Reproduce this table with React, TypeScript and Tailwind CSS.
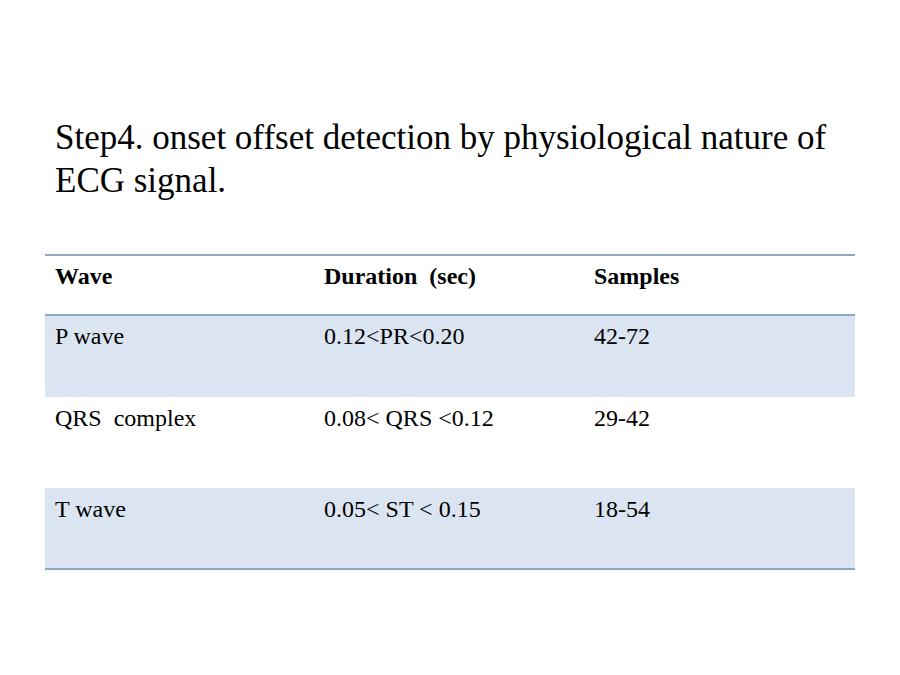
const rows = [
  { wave: "P wave", duration: "0.12<PR<0.20", samples: "42-72", fill: true, h: "h-[81px]", pt: "pt-2" },
  { wave: "QRS  complex", duration: "0.08< QRS <0.12", samples: "29-42", fill: false, h: "h-[91px]", pt: "pt-[9px]" },
  { wave: "T wave", duration: "0.05< ST < 0.15", samples: "18-54", fill: true, h: "h-[80px]", pt: "pt-[9px]" },
];

export default function App() {
  return (
    <div
      className="w-[900px] h-[675px] bg-white text-black overflow-hidden"
      style={{ fontFamily: '"Liberation Serif", "Times New Roman", serif' }}
    >
      <h1 className="pl-[55px] pr-10 pt-[116px] text-[35px] leading-[43px] font-normal whitespace-pre-wrap">
        Step4. onset offset detection by physiological nature of{"\n"}ECG signal.
      </h1>

      <div className="ml-[45px] mt-[52px] w-[810px] border-t-2 border-b-2 border-[#8ea9c8] text-[24px] leading-6">
        <div className="grid grid-cols-3 h-[60px] pt-2 font-bold border-b-2 border-[#8ea9c8]">
          <div className="pl-[10px]">Wave</div>
          <div className="pl-[9px] whitespace-pre">Duration  (sec)</div>
          <div className="pl-[9px]">Samples</div>
        </div>
        {rows.map((r, i) => (
          <div
            key={i}
            className={`grid grid-cols-3 whitespace-pre ${r.h} ${r.pt} ${r.fill ? "bg-[#dbe5f1]" : "bg-white"}`}
          >
            <div className="pl-[10px]">{r.wave}</div>
            <div className="pl-[9px]">{r.duration}</div>
            <div className="pl-[9px]">{r.samples}</div>
          </div>
        ))}
      </div>
    </div>
  );
}
